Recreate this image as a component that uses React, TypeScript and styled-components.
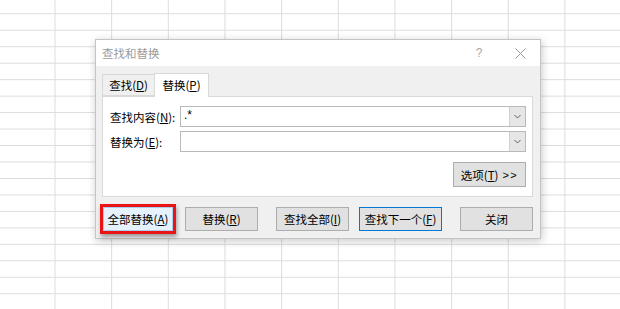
import * as React from 'react'
import styled, { createGlobalStyle } from 'styled-components'

const GlobalStyle = createGlobalStyle`
  html, body {
    margin: 0;
    padding: 0;
    background: #fff;
  }
  body {
    font-family: "Noto Sans CJK SC", "Liberation Sans", sans-serif;
    color: #000;
  }
`

const S = {
  Sheet: styled.div`
  width: 620px;
  height: 309px;
  overflow: hidden;
  box-sizing: border-box;
  padding: 39px 0 0 95px;
  background-color: #fff;
  background-image:
    linear-gradient(90deg, #dcdcdc 1px, transparent 1px),
    linear-gradient(180deg, #dcdcdc 1px, transparent 1px);
  background-size: 56.67px 100%, 100% 16.47px;
  background-position: 54.5px 0, 0 13.3px;
`,
  Dialog: styled.div`
  width: 446px;
  height: 200px;
  box-sizing: border-box;
  border: 1px solid #c4c4c4;
  background: #f0f0f0;
  box-shadow: 1px 2px 8px rgba(0, 0, 0, 0.22);
  display: flex;
  flex-direction: column;
`,
  TitleBar: styled.div`
  height: 26px;
  flex-shrink: 0;
  background: #fff;
  display: flex;
  align-items: center;
  padding-left: 6px;
`,
  Title: styled.span`
  font-size: 11.5px;
  color: #9b9b9b;
`,
  TitleButtons: styled.div`
  margin-left: auto;
  display: flex;
  align-items: center;
  height: 100%;
`,
  TitleButton: styled.div<{ $w: number }>`
  width: ${p => p.$w}px;
  height: 100%;
  display: flex;
  align-items: center;
  justify-content: center;
  color: #a8a8a8;
  font-family: "Liberation Sans", sans-serif;
  font-size: 12px;
`,
  Body: styled.div`
  padding: 7px 7px 0 6px;
  display: flex;
  flex-direction: column;
`,
  Tabs: styled.div`
  display: flex;
  align-items: flex-end;
  height: 23px;
  position: relative;
  z-index: 1;
`,
  Tab: styled.div<{ $active?: boolean; $w: number }>`
  width: ${p => p.$w}px;
  box-sizing: border-box;
  height: ${p => (p.$active ? 24 : 22)}px;
  margin-bottom: ${p => (p.$active ? -1 : 0)}px;
  padding-bottom: ${p => (p.$active ? 1 : 0)}px;
  background: ${p => (p.$active ? '#fff' : '#f0f0f0')};
  border: 1px solid #d9d9d9;
  border-bottom: ${p => (p.$active ? 'none' : '1px solid #d9d9d9')};
  border-right: ${p => (p.$active ? '1px solid #d9d9d9' : 'none')};
  display: flex;
  align-items: center;
  justify-content: center;
  font-size: 11.5px;
`,
  Panel: styled.div`
  height: 101px;
  box-sizing: border-box;
  background: #fff;
  border: 1px solid #d9d9d9;
  padding: 9px 6px 0 7px;
  display: flex;
  flex-direction: column;
  gap: 4px;
`,
  Row: styled.div`
  display: grid;
  grid-template-columns: 70px 1fr;
  align-items: center;
  height: 21px;
`,
  Label: styled.span`
  font-size: 11.5px;
`,
  Combo: styled.div`
  height: 21px;
  box-sizing: border-box;
  border: 1px solid #b9b9b9;
  display: flex;
  background: #fff;
`,
  Value: styled.div`
  flex: 1;
  padding-left: 3px;
  font-family: "Liberation Sans", sans-serif;
  font-size: 12px;
  line-height: 16px;
`,
  DropButton: styled.div`
  width: 15px;
  border-left: 1px solid #d0d0d0;
  background: #e6e6e6;
  display: flex;
  align-items: center;
  justify-content: center;
`,
  OptionsRow: styled.div`
  display: flex;
  justify-content: flex-end;
  margin-top: 6px;
`,
  Footer: styled.div`
  display: flex;
  align-items: center;
  margin-top: 10px;
  height: 24px;
`,
  Button: styled.div<{ $w: number; $ml?: number; $h?: number; $primary?: boolean; $focus?: boolean }>`
  width: ${p => p.$w}px;
  height: ${p => p.$h ?? 24}px;
  margin-left: ${p => p.$ml ?? 0}px;
  box-sizing: border-box;
  border: 1px solid ${p => (p.$primary ? '#0078d7' : p.$focus ? '#a9cdee' : '#adadad')};
  background: ${p => (p.$focus ? '#e5f1fb' : '#e1e1e1')};
  display: flex;
  align-items: center;
  justify-content: center;
  font-size: 11.5px;
  flex-shrink: 0;
`,
  Highlight: styled.div`
  border: 3px solid #ea1414;
  margin-left: -2px;
  display: flex;
  box-shadow: 1px 3px 4px rgba(0, 0, 0, 0.35);
`,
  Arrows: styled.span`
  font-family: "Liberation Sans", sans-serif;
  font-size: 11px;
  letter-spacing: 1.5px;
  margin-left: 4px;
`
}

function Chevron() {
  return (
    <svg width="7" height="5" viewBox="0 0 7 5">
      <path d="M0.5 1 L3.5 4 L6.5 1" fill="none" stroke="#606060" strokeWidth="1" />
    </svg>
  )
}

function CloseIcon() {
  return (
    <svg width="11" height="11" viewBox="0 0 11 11">
      <path d="M0.5 0.5 L10.5 10.5 M10.5 0.5 L0.5 10.5" stroke="#9a9a9a" strokeWidth="1" />
    </svg>
  )
}

export default function App() {
  return (
    <>
      <GlobalStyle />
      <S.Sheet>
        <S.Dialog>
          <S.TitleBar>
            <S.Title>查找和替换</S.Title>
            <S.TitleButtons>
              <S.TitleButton $w={42}>?</S.TitleButton>
              <S.TitleButton $w={40}><CloseIcon /></S.TitleButton>
            </S.TitleButtons>
          </S.TitleBar>
          <S.Body>
            <S.Tabs>
              <S.Tab $w={52}>查找(<u>D</u>)</S.Tab>
              <S.Tab $w={55} $active>替换(<u>P</u>)</S.Tab>
            </S.Tabs>
            <S.Panel>
              <S.Row>
                <S.Label>查找内容(<u>N</u>):</S.Label>
                <S.Combo>
                  <S.Value>.*</S.Value>
                  <S.DropButton><Chevron /></S.DropButton>
                </S.Combo>
              </S.Row>
              <S.Row>
                <S.Label>替换为(<u>E</u>):</S.Label>
                <S.Combo>
                  <S.Value />
                  <S.DropButton><Chevron /></S.DropButton>
                </S.Combo>
              </S.Row>
              <S.OptionsRow>
                <S.Button $w={73} $h={25}>选项(<u>T</u>)<S.Arrows>&gt;&gt;</S.Arrows></S.Button>
              </S.OptionsRow>
            </S.Panel>
            <S.Footer>
              <S.Highlight>
                <S.Button $w={70} $focus>全部替换(<u>A</u>)</S.Button>
              </S.Highlight>
              <S.Button $w={73} $ml={9}>替换(<u>R</u>)</S.Button>
              <S.Button $w={73} $ml={18}>查找全部(<u>I</u>)</S.Button>
              <S.Button $w={83} $ml={10} $primary>查找下一个(<u>F</u>)</S.Button>
              <S.Button $w={73} $ml={18}>关闭</S.Button>
            </S.Footer>
          </S.Body>
        </S.Dialog>
      </S.Sheet>
    </>
  )
}
